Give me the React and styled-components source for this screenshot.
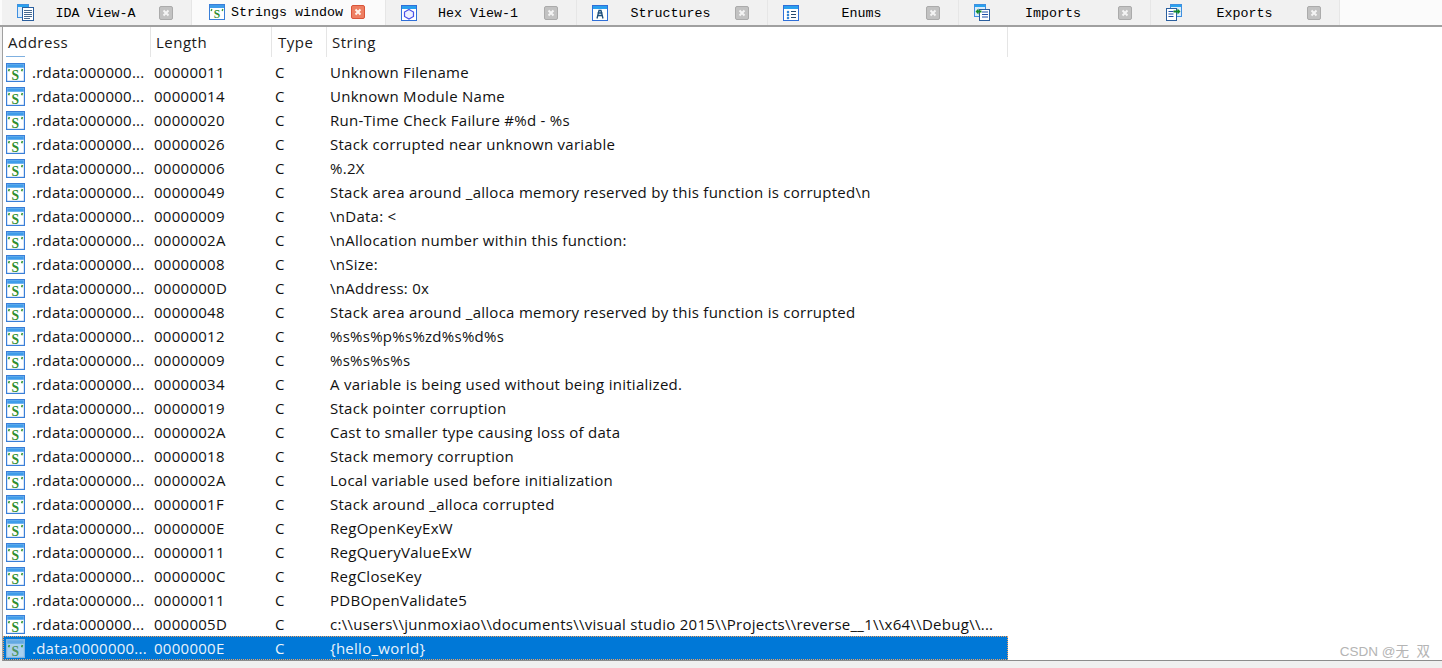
import React from "react";
import styled, { createGlobalStyle } from "styled-components";

const GlobalStyle = createGlobalStyle`
    html, body {
        margin: 0;
        padding: 0;
        background: #f0f0f0;
    }
`;

const Page = styled.div`
    position: relative;
    width: 1442px;
    height: 668px;
    overflow: hidden;
    display: flex;
    flex-direction: column;
    background: #f0f0f0;
    font-family: "Open Sans", "Noto Sans", sans-serif;
`;

const TabBar = styled.div`
    display: flex;
    height: 25px;
    padding-left: 2px;
    border-bottom: 2px solid #a0a0a0;
    background: #fbfbfb;
`;

const Tab = styled.div`
    box-sizing: border-box;
    width: ${(p) => p.$width}px;
    display: flex;
    align-items: center;
    justify-content: space-between;
    padding: ${(p) => (p.$active ? "0 20px 2px 17px" : "0 18px 0 15px")};
    border-right: 1px solid #e6e6e6;
    background: ${(p) => (p.$active ? "#fbfbfb" : "#f1f1f1")};
`;

const TabLabel = styled.span`
    margin-top: 3px;
    margin-right: ${(p) => p.$nudge || 0}px;
    font-family: "Liberation Mono", "DejaVu Sans Mono", monospace;
    font-size: 13.33px;
    line-height: 16px;
    color: #000;
    white-space: pre;
`;

const Frame = styled.div`
    flex: 1;
    margin: 0 0 7px 2px;
    background: #fff;
    border-left: 1px solid #a0a0a0;
    border-bottom: 1px solid #8c8c8c;
`;

const ListGrid = styled.div`
    width: 1005px;
    display: grid;
    grid-template-columns: 148px 121px 55px 681px;
`;

const HeaderRow = styled(ListGrid)`
    height: 30px;
    margin-bottom: 3px;
`;

const HeaderCell = styled.div`
    position: relative;
    box-sizing: border-box;
    padding-left: ${(p) => p.$indent || 5}px;
    border-right: 1px solid #e5e5e5;
    font-size: 15px;
    letter-spacing: 0.5px;
    line-height: 30px;
    color: #1a1a1a;

    &:first-child::after {
        content: "";
        position: absolute;
        left: 3px;
        bottom: 0;
        width: 19px;
        height: 1px;
        background: #7fb0e0;
    }
`;

const Row = styled(ListGrid)`
    box-sizing: border-box;
    height: 24px;
    align-items: center;
    background: ${(p) => (p.$selected ? "#0078d7" : "transparent")};
    color: ${(p) => (p.$selected ? "#eaf3fb" : "#111")};
    outline: ${(p) => (p.$selected ? "1px dotted #f0a060" : "none")};
    outline-offset: -1px;
`;

const Cell = styled.div`
    box-sizing: border-box;
    padding-left: ${(p) => p.$indent || 3}px;
    font-size: 15px;
    letter-spacing: 0.27px;
    line-height: 24px;
    white-space: pre;
    overflow: hidden;
`;

const AddressCell = styled(Cell)`
    display: flex;
    align-items: center;
    gap: 7px;
    letter-spacing: 0.25px;
`;

const IconSvg = styled.svg`
    display: block;
    flex: none;
`;

const Watermark = styled.div`
    position: absolute;
    right: 12px;
    bottom: 8px;
    font-family: "Liberation Sans", "Noto Sans CJK SC", sans-serif;
    font-size: 13.5px;
    line-height: 16px;
    color: #b4b4b4;
    white-space: pre;
`;

const WindowFrame = ({ children }) => (
    <>
        <rect x="0.5" y="0.5" width="15" height="15" fill="#fff" stroke="#2f6fd8" />
        <rect x="1" y="1" width="14" height="3" fill="#2aa0ee" />
        {children}
    </>
);

const PagesIcon = () => (
    <IconSvg width="17" height="17" viewBox="0 0 17 17">
        <rect x="0.5" y="0.5" width="11" height="13" fill="#dcecfb" stroke="#3f8fe0" />
        <rect x="1" y="1" width="10" height="2" fill="#29a3ee" />
        <rect x="5.5" y="3.5" width="11" height="13" fill="#fff" stroke="#2b5f9e" />
        <path d="M7 6.5h8M7 8.5h8M7 10.5h8M7 12.5h8M7 14.5h6" stroke="#46688e" />
    </IconSvg>
);

const StringIcon = ({ size = 16, selected }) => (
    <IconSvg width={size} height={size} viewBox="0 0 16 16">
        <rect x="0.5" y="0.5" width="15" height="15" fill={selected ? "#a9d0ee" : "#fff"} stroke={selected ? "#7fb4e2" : "#3a7fd8"} />
        <rect x="1" y="1" width="14" height="3" fill={selected ? "#62a8e2" : "#3f9cea"} />
        <path d="M2.8 5 L2.2 7M13.8 5 L13.2 7" stroke="#3f9a3f" strokeWidth="1.4" />
        <text x="8" y="14" textAnchor="middle" fontFamily="'Liberation Serif', serif" fontWeight="700" fontSize="11.5" fill={selected ? "#4f9460" : "#2f8f2f"}>S</text>
    </IconSvg>
);

const HexIcon = () => (
    <IconSvg width="16" height="16" viewBox="0 0 16 16">
        <WindowFrame />
        <path d="M8 4.5 L12.5 7 V11.5 L8 14 L3.5 11.5 V7 Z" fill="#eef0ff" stroke="#4a52e8" strokeWidth="1.2" />
    </IconSvg>
);

const StructIcon = () => (
    <IconSvg width="16" height="16" viewBox="0 0 16 16">
        <WindowFrame />
        <path d="M5 13.5 L7 5.5h2l2 8M6 10.5h4M5.5 8h5" fill="none" stroke="#1f4f7a" strokeWidth="1.3" />
    </IconSvg>
);

const EnumIcon = () => (
    <IconSvg width="16" height="16" viewBox="0 0 16 16">
        <WindowFrame />
        <path d="M8 6.5h5M8 9.5h5M8 12.5h5" stroke="#26496e" />
        <path d="M5 5.5l1.5 1.5L5 8.5 3.5 7zM5 8.5l1.5 1.5L5 11.5 3.5 10zM5 11.5l1.5 1.5L5 14.5 3.5 13z" fill="#1976d2" />
    </IconSvg>
);

const ImportIcon = () => (
    <IconSvg width="16" height="17" viewBox="0 0 16 17">
        <rect x="0.5" y="0.5" width="11" height="12" fill="#dcecfb" stroke="#3f8fe0" />
        <rect x="1" y="1" width="10" height="2" fill="#29a3ee" />
        <rect x="5.5" y="5.5" width="10" height="11" fill="#fff" stroke="#2b5f9e" />
        <path d="M8 8h6M8 10.5h6M8 13h6" stroke="#1d4fa8" />
        <path d="M1.5 7.5l3-3v2h3v2h-3v2z" fill="#128a2c" />
    </IconSvg>
);

const ExportIcon = () => (
    <IconSvg width="16" height="17" viewBox="0 0 16 17">
        <rect x="4.5" y="0.5" width="11" height="12" fill="#dcecfb" stroke="#3f8fe0" />
        <rect x="5" y="1" width="10" height="2" fill="#29a3ee" />
        <rect x="0.5" y="4.5" width="10" height="12" fill="#fff" stroke="#2b5f9e" />
        <path d="M2.5 7.5h5M2.5 10h5M2.5 12.5h5" stroke="#1d4fa8" />
        <path d="M14.5 7.5l-3-3v2h-4v2h4v2z" fill="#128a2c" />
    </IconSvg>
);

const CloseIcon = ({ active }) => (
    <IconSvg width="14" height="14" viewBox="0 0 14 14">
        <rect x="0.5" y="0.5" width="13" height="13" rx="1.5" fill={active ? "#ee7f62" : "#c2c2c2"} stroke={active ? "#d9553a" : "#ababab"} />
        <path d="M4.5 4.5l5 5M9.5 4.5l-5 5" stroke={active ? "#fff3ea" : "#f4f4f4"} strokeWidth="2" />
    </IconSvg>
);

const tabs = [
    { label: "IDA View-A", width: 190, icon: <PagesIcon />, nudge: 2 },
    { label: "Strings window", width: 194, icon: <StringIcon />, active: true, nudge: 2 },
    { label: "Hex View-1", width: 191, icon: <HexIcon />, nudge: 5 },
    { label: "Structures", width: 191, icon: <StructIcon />, nudge: 2 },
    { label: "Enums", width: 191, icon: <EnumIcon />, nudge: 2 },
    { label: "Imports", width: 192, icon: <ImportIcon />, nudge: 2 },
    { label: "Exports", width: 189, icon: <ExportIcon /> },
];

const strings = [
    ["00000011", "Unknown Filename"],
    ["00000014", "Unknown Module Name"],
    ["00000020", "Run-Time Check Failure #%d - %s"],
    ["00000026", "Stack corrupted near unknown variable"],
    ["00000006", "%.2X"],
    ["00000049", "Stack area around _alloca memory reserved by this function is corrupted\\n"],
    ["00000009", "\\nData: <"],
    ["0000002A", "\\nAllocation number within this function:"],
    ["00000008", "\\nSize:"],
    ["0000000D", "\\nAddress: 0x"],
    ["00000048", "Stack area around _alloca memory reserved by this function is corrupted"],
    ["00000012", "%s%s%p%s%zd%s%d%s"],
    ["00000009", "%s%s%s%s"],
    ["00000034", "A variable is being used without being initialized."],
    ["00000019", "Stack pointer corruption"],
    ["0000002A", "Cast to smaller type causing loss of data"],
    ["00000018", "Stack memory corruption"],
    ["0000002A", "Local variable used before initialization"],
    ["0000001F", "Stack around _alloca corrupted"],
    ["0000000E", "RegOpenKeyExW"],
    ["00000011", "RegQueryValueExW"],
    ["0000000C", "RegCloseKey"],
    ["00000011", "PDBOpenValidate5"],
    ["0000005D", "c:\\\\users\\\\junmoxiao\\\\documents\\\\visual studio 2015\\\\Projects\\\\reverse__1\\\\x64\\\\Debug\\\\..."],
];

const App = () => {
    return (
        <Page>
            <GlobalStyle />
            <TabBar>
                {tabs.map((tab) => (
                    <Tab key={tab.label} $width={tab.width} $active={tab.active}>
                        {tab.icon}
                        <TabLabel $nudge={tab.nudge}>{tab.label}</TabLabel>
                        <CloseIcon active={tab.active} />
                    </Tab>
                ))}
            </TabBar>
            <Frame>
                <HeaderRow>
                    <HeaderCell>Address</HeaderCell>
                    <HeaderCell>Length</HeaderCell>
                    <HeaderCell $indent={6}>Type</HeaderCell>
                    <HeaderCell>String</HeaderCell>
                </HeaderRow>
                {strings.map(([length, text], i) => (
                    <Row key={i}>
                        <AddressCell>
                            <StringIcon size={19} />
                            .rdata:000000...
                        </AddressCell>
                        <Cell>{length}</Cell>
                        <Cell $indent={3}>C</Cell>
                        <Cell>{text}</Cell>
                    </Row>
                ))}
                <Row $selected>
                    <AddressCell>
                        <StringIcon size={19} selected />
                        .data:0000000...
                    </AddressCell>
                    <Cell>0000000E</Cell>
                    <Cell $indent={3}>C</Cell>
                    <Cell>{"{hello_world}"}</Cell>
                </Row>
            </Frame>
            <Watermark>CSDN @无  双</Watermark>
        </Page>
    );
};

export default App;
